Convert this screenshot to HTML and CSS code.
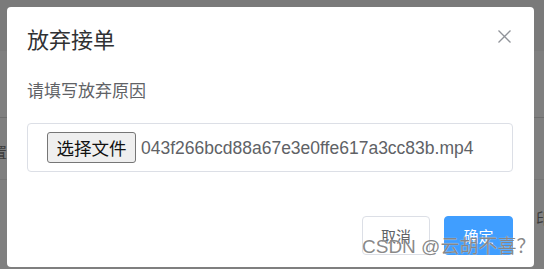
FILE: index.html
```html
<!DOCTYPE html>
<html lang="zh-CN">
<head>
<meta charset="utf-8">
<title>放弃接单</title>
<link rel="stylesheet" href="styles.css">
</head>
<body>
<div class="backdrop">
  <div class="bg-row bg-top"></div>
  <div class="bg-row bg-mid"></div>
  <div class="bg-row bg-row2"><span class="bg-left">置</span></div>
  <div class="bg-row bg-row3"><span class="bg-left">3</span><span class="bg-right">印</span></div>
</div>

<div class="dialog">
  <div class="dialog-header">
    <span class="dialog-title">放弃接单</span>
    <svg class="dialog-close" width="13" height="13" viewBox="0 0 13 13">
      <path d="M0.5 0.5 L12.5 12.5 M12.5 0.5 L0.5 12.5" stroke="#909399" stroke-width="1.3" fill="none"/>
    </svg>
  </div>
  <div class="dialog-body">
    <p class="reason-label">请填写放弃原因</p>
    <div class="file-box">
      <span class="file-btn">选择文件</span>
      <span class="file-name">043f266bcd88a67e3e0ffe617a3cc83b.mp4</span>
    </div>
  </div>
  <div class="dialog-footer">
    <button class="btn btn-default">取消</button>
    <button class="btn btn-primary">确定</button>
  </div>
</div>

<div class="watermark">CSDN @云胡不喜？</div>
</body>
</html>
```

FILE: styles.css
```css
* { box-sizing: border-box; }

html, body {
  margin: 0;
  padding: 0;
  width: 544px;
  height: 269px;
  overflow: hidden;
}

body {
  background: #7f7f7f;
  font-family: "Liberation Sans", "Noto Sans CJK SC", sans-serif;
  position: relative;
}

.backdrop {
  display: flex;
  flex-direction: column;
}

.bg-row {
  display: flex;
  justify-content: space-between;
  align-items: center;
  overflow: hidden;
}

.bg-top {
  height: 51px;
  background: #7a7a7a;
}

.bg-mid {
  height: 67px;
  border-bottom: 1px solid #6e6e6e;
  background: #7f7f7f;
}

.bg-row2 {
  height: 62px;
  border-bottom: 1px solid #767676;
  padding-top: 6px;
}

.bg-row3 {
  height: 80px;
  align-items: flex-start;
  padding-top: 28px;
}

.bg-left,
.bg-right {
  font-size: 15px;
  line-height: 20px;
  color: #3c3c3c;
  font-family: "Noto Sans CJK SC", "Liberation Sans", sans-serif;
}

.bg-left { margin-left: -8px; }
.bg-right { margin-right: -7px; }

.dialog {
  position: absolute;
  top: 7px;
  left: 7px;
  width: 527px;
  height: 260px;
  background: #fff;
  border-radius: 4px;
  padding: 19px 21px 0 20px;
  display: flex;
  flex-direction: column;
}

.dialog-header {
  display: flex;
  justify-content: space-between;
  align-items: flex-start;
  height: 24px;
}

.dialog-title {
  font-family: "Noto Sans CJK SC", "Liberation Sans", sans-serif;
  font-size: 22px;
  line-height: 24px;
  color: #303133;
}

.dialog-close {
  margin-top: 4px;
  margin-right: 2px;
}

.dialog-body {
  display: flex;
  flex-direction: column;
}

.reason-label {
  margin: 28px 0 0;
  font-family: "Noto Sans CJK SC", "Liberation Sans", sans-serif;
  font-size: 17px;
  line-height: 24px;
  color: #606266;
}

.file-box {
  margin-top: 21px;
  height: 49px;
  border: 1px solid #dcdfe6;
  border-radius: 4px;
  padding: 8px 19px;
  display: flex;
  align-items: center;
  gap: 5px;
}

.file-btn {
  height: 31px;
  width: 89px;
  display: flex;
  align-items: center;
  justify-content: center;
  background: #efefef;
  border: 1px solid #767676;
  border-radius: 3px;
  font-family: "Noto Sans CJK SC", "Liberation Sans", sans-serif;
  font-size: 17.5px;
  color: #111;
}

.file-name {
  font-size: 17.5px;
  line-height: 24px;
  color: #606266;
  white-space: nowrap;
}

.dialog-footer {
  margin-top: 44px;
  display: flex;
  justify-content: flex-end;
  gap: 14px;
}

.btn {
  height: 39px;
  width: 68px;
  padding: 0;
  border-radius: 4px;
  font-family: "Noto Sans CJK SC", "Liberation Sans", sans-serif;
  font-size: 15px;
  line-height: 1;
  cursor: pointer;
}

.btn-default {
  background: #fff;
  border: 1px solid #dcdfe6;
  color: #606266;
}

.btn-primary {
  width: 69px;
  background: #409eff;
  border: 1px solid #409eff;
  color: #fff;
}

.watermark {
  position: absolute;
  left: 362px;
  top: 235px;
  font-size: 19px;
  line-height: 24px;
  color: rgba(125, 125, 125, 0.92);
  text-shadow: 0 0 1px rgba(255, 255, 255, 0.9);
  white-space: nowrap;
}
```
